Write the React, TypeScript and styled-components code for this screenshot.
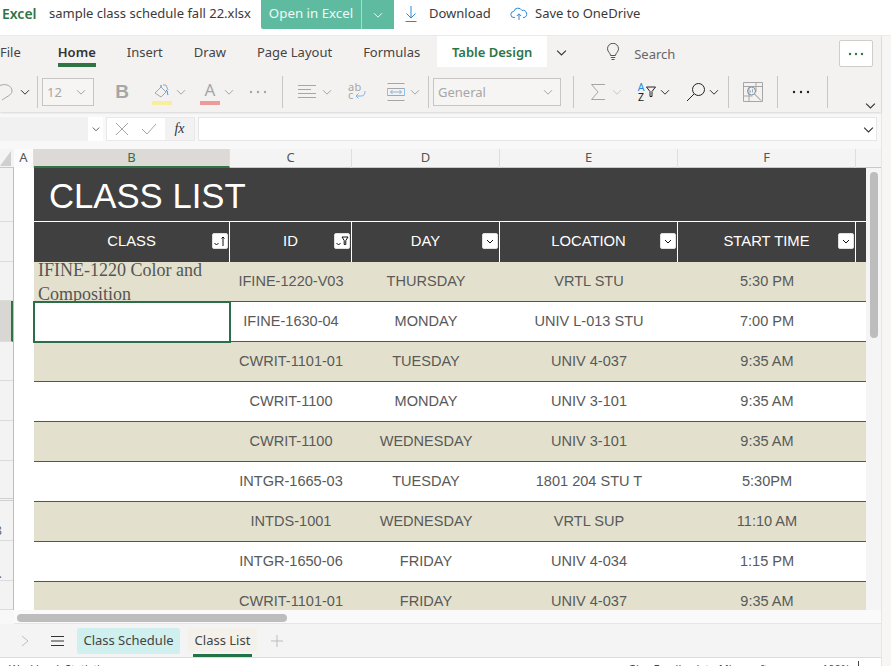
import React from "react";
import styled, { createGlobalStyle } from "styled-components";

const Global = createGlobalStyle`
  html, body { margin: 0; padding: 0; background: #fff; }
  * { box-sizing: border-box; }
`;
const UI = `"Noto Sans", "Open Sans", sans-serif`;
const CELL = `"Liberation Sans", Arial, sans-serif`;
const GREEN = "#2f7445";
const COLS = "196px 122px 148px 178px 178px 10px";

const Page = styled.div`
  width: 891px; height: 666px; overflow: hidden; display: flex; flex-direction: column;
  font-family: ${UI}; color: #444; background: #fff;
`;
const TopBar = styled.header`
  height: 36px; flex: none; display: flex; align-items: flex-start; padding-left: 2px;
  border-bottom: 1px solid #ececec; font-size: 13px; color: #3b3a39; line-height: 27px;
`;
const Brand = styled.span`font-weight: 600; color: ${GREEN}; font-size: 14px; width: 47px;`;
const FileName = styled.span`width: 212px; white-space: nowrap;`;
const OpenGroup = styled.div`
  display: flex; height: 29px; width: 133px; background: #5fbba0; color: #eefaf6; border-bottom-left-radius: 2px;
  font-size: 13.300px; margin-right: 7px;
`;
const OpenLabel = styled.span`width: 101px; text-align: center; border-right: 1px solid #a9dccd;`;
const OpenChevron = styled.span`flex: 1; display: flex; align-items: center; justify-content: center;`;
const TopAction = styled.span<{ $ml?: number; $w?: number }>`
  display: flex; align-items: center; height: 27px; white-space: nowrap; margin-left: ${p => p.$ml ?? 0}px;
  ${p => (p.$w ? `width: ${p.$w}px;` : "")}
`;
const TopActionIcon = styled.span<{ $w: number }>`width: ${p => p.$w}px; display: flex; justify-content: center;`;

const Workspace = styled.div`flex: 1; min-height: 0; display: flex;`;
const Main = styled.div`width: 881px; flex: none; display: flex; flex-direction: column; min-height: 0; background: #f8f8f8;`;
const RightStrip = styled.div`flex: 1; background: #f7f6f5; border-left: 1px solid #e8e6e4;`;

const Ribbon = styled.div`background: #f3f2f1; flex: none; box-shadow: 0 1px 2px rgba(0,0,0,.14); position: relative;`;
const TabsRow = styled.nav`
  height: 32px; display: flex; align-items: flex-start; font-size: 13px; color: #444; position: relative; gap: 31px; line-height: 32px;
`;
const NavTab = styled.span<{ $active?: boolean; $ml?: number }>`
  height: 31px; white-space: nowrap; margin-left: ${p => p.$ml ?? 0}px;
  font-weight: ${p => (p.$active ? 600 : 400)}; color: ${p => (p.$active ? "#333" : "#444")};
  border-bottom: ${p => (p.$active ? `4px solid ${GREEN}` : "none")};
`;
const ContextTab = styled.span`
  height: 31px; width: 110px; margin-left: -14px; background: #fff; color: ${GREEN}; font-weight: 600; text-align: center; white-space: nowrap;
`;
const TabTools = styled.div`display: flex; align-items: center; height: 32px; margin-left: -22px;`;
const SearchLabel = styled.span`margin-left: 9px; color: #666; margin-top: 3px;`;
const MoreButton = styled.button`
  margin-left: auto; margin-right: 8px; margin-top: 4px; width: 34px; height: 27px; background: #fff; border: 1px solid #cfcdcb; border-radius: 2px;
  padding: 0; display: flex; align-items: center; justify-content: center;
`;
const Toolbar = styled.div`height: 44px; display: flex; align-items: center; padding-top: 4px; position: relative; overflow: hidden;`;
const Slot = styled.span<{ $w: number; $ml?: number }>`
  width: ${p => p.$w}px; margin-left: ${p => p.$ml ?? 0}px; flex: none; display: flex; align-items: center; justify-content: center; height: 30px;
`;
const Sep = styled.span<{ $ml?: number }>`width: 1px; height: 32px; flex: none; background: #c8c6c4; margin-left: ${p => p.$ml ?? 0}px;`;
const SelectBox = styled.span<{ $w: number; $ml: number }>`
  width: ${p => p.$w}px; margin-left: ${p => p.$ml}px; height: 28px; flex: none; border: 1px solid #c8c6c4; display: flex; align-items: center;
  justify-content: space-between; padding: 0 7px 0 4px; font-size: 13px; color: #a6a6a6; background: #f6f5f4;
`;
const BoldGlyph = styled.span`font: 700 19px ${CELL}; color: #a6a6a6;`;
const ColorTool = styled.span`display: flex; flex-direction: column; align-items: center; width: 20px; height: 30px; justify-content: flex-end;`;
const ColorGlyph = styled.span`font: 400 17px/20px ${UI}; color: #a6a6a6; height: 21px;`;
const ColorBar = styled.span<{ $c: string }>`display: block; width: 20px; height: 4px; background: ${p => p.$c}; margin-bottom: 2px;`;
const Wrap = styled.span`font: 400 11px/8px ${UI}; color: #a6a6a6; position: relative; display: block; width: 18px; height: 20px; padding-top: 1px; letter-spacing: 0.3px;`;
const AZ = styled.span`display: flex; flex-direction: column; font: 400 10.500px/10px ${UI}; width: 9px; align-items: center;`;
const AZa = styled.span`color: #2b88d8;`;
const AZz = styled.span`color: #222;`;
const CollapseRibbon = styled.span`position: absolute; right: 4px; bottom: 0; width: 14px; height: 14px; display: flex; align-items: center; justify-content: center;`;

const FormulaBar = styled.div`height: 33px; flex: none; display: flex; align-items: center; padding-top: 5px; padding-bottom: 4px;`;
const NameBox = styled.div`width: 103px; height: 24px; background: #f1f1f1; display: flex; justify-content: flex-end;`;
const NameArrow = styled.span`width: 15px; background: #fff; display: flex; align-items: center; justify-content: center;`;
const FormulaButtons = styled.div`width: 89px; height: 24px; margin-left: 3px; display: flex; border: 1px solid #e9e9e9; background: #fff;`;
const FxIcons = styled.span`width: 58px; display: flex; align-items: center; justify-content: space-around; padding: 0 2px;`;
const FxBox = styled.span`flex: 1; background: #f2f2f2; font: italic 400 14px "Liberation Serif", serif; color: #333; display: flex; align-items: center; justify-content: center;`;
const FormulaInput = styled.div`width: 679px; height: 24px; margin-left: 3px; background: #fff; border: 1px solid #e6e6e6; display: flex; align-items: center; justify-content: flex-end; padding-right: 2px;`;

const ColHeadRow = styled.div`
  height: 19px; flex: none; margin-top: 4px; display: flex; background: #f4f4f4; border-bottom: 1px solid #c8c8c8; position: relative; font-size: 13px; color: #555;
`;
const Corner = styled.span`width: 14px; flex: none; display: flex; align-items: flex-end; padding-bottom: 0;`;
const ColHead = styled.span<{ $w: number; $sel?: boolean; $white?: boolean }>`
  width: ${p => p.$w}px; flex: none; text-align: center; line-height: 17px; height: 19px;
  border-right: 1px solid #dedede;
  background: ${p => (p.$sel ? "#dcd9d6" : p.$white ? "#fbfbfb" : "transparent")};
  color: ${p => (p.$sel ? GREEN : "#555")};
  border-bottom: ${p => (p.$sel ? `2px solid ${GREEN}` : "none")};
`;
const SheetBody = styled.div`height: 442px; flex: none; display: flex; overflow: hidden;`;
const Gutter = styled.div`width: 14px; flex: none; background: #f3f3f3; border-right: 1px solid #bdbdbd; display: flex; flex-direction: column;`;
const GutterRow = styled.div<{ $h: number; $sel?: boolean; $double?: boolean }>`
  height: ${p => p.$h}px; flex: none; position: relative;
  background: ${p => (p.$sel ? "#d9d7d4" : "transparent")};
  border-right: ${p => (p.$sel ? `2px solid ${GREEN}` : "none")};
  border-bottom: ${p => (p.$double ? "3px double #d0d0d0" : "1px solid #dcdcdc")};
  overflow: hidden;
`;
const RowNumber = styled.span<{ $top: number }>`
  position: absolute; right: 11px; top: ${p => p.$top}px; font-size: 13px; line-height: 16px; color: #666;
`;
const ColA = styled.div`width: 20px; flex: none; background: #fff;`;
const Table = styled.div`width: 832px; flex: none; font: 14.550px ${CELL}; color: #595959; background: #fff;`;
const TitleRow = styled.div`
  height: 54px; background: #404040; color: #fff; border-bottom: 1px solid #fff; font: 34.700px/53px ${CELL}; padding: 2px 0 0 15px; white-space: nowrap;
`;
const HeaderRow = styled.div`display: grid; grid-template-columns: ${COLS}; height: 40px; background: #404040; color: #fff; font-size: 14.800px;`;
const HeaderCell = styled.div`position: relative; border-right: 1px solid #fff; text-align: center; line-height: 38px; height: 40px; &:last-child { border-right: none; }`;
const FilterBtn = styled.span`
  position: absolute; right: 1px; top: 11px; width: 16px; height: 16px; background: #fff; border-radius: 2px; border: 1px solid #e0e0e0;
  display: flex; align-items: center; justify-content: center;
`;
const DataRow = styled.div<{ $band: boolean }>`
  display: grid; grid-template-columns: ${COLS}; height: 40px; background: ${p => (p.$band ? "#e3e1cd" : "#fff")}; border-bottom: 1px solid #555;
`;
const Cell = styled.div`text-align: center; line-height: 38px; white-space: nowrap;`;
const SerifCell = styled.div`
  font: 18px/24px "Liberation Serif", serif; color: #555; padding: 0 0 0 4px; height: 43px; overflow: hidden; text-align: left; white-space: nowrap;
  margin-top: -4px;
`;
const SelectedCell = styled.div`outline: 2px solid #2c6e49; outline-offset: -1px; margin: 0; height: 40px;`;
const VTrack = styled.div`flex: 1; background: #f5f5f5; padding: 4px 0 0 4px;`;
const VThumb = styled.div`width: 8px; height: 166px; border-radius: 4px; background: #bdbdbd;`;
const HTrack = styled.div`height: 14px; flex: none; margin-left: 14px; background: #fafafa; padding: 4px 0 0 3px; border-bottom: 1px solid #e6e6e6;`;
const HThumb = styled.div`width: 270px; height: 8px; border-radius: 4px; background: #bdbdbd;`;
const SheetTabs = styled.div`height: 34px; flex: none; background: #f4f4f4; border-bottom: 1px solid #dcdcdc; display: flex; align-items: flex-start; padding-top: 4px; font-size: 13px; color: #444;`;
const SheetNav = styled.span<{ $w: number }>`width: ${p => p.$w}px; height: 26px; flex: none; display: flex; align-items: center; justify-content: center;`;
const SheetTab = styled.span<{ $w: number; $bg: string; $h: number; $ml?: number }>`
  width: ${p => p.$w}px; height: ${p => p.$h}px; background: ${p => p.$bg}; margin-left: ${p => p.$ml ?? 0}px; border-radius: 2px; flex: none; text-align: center; line-height: 24px; white-space: nowrap; position: relative;
`;
const ActiveMark = styled.span`position: absolute; left: 5px; right: 5px; top: 26px; height: 3px; background: #217346;`;
const StatusBar = styled.div`flex: 1; background: #fff; display: flex; font-size: 11px; color: #444; padding: 3px 0 0 9px; white-space: nowrap; line-height: 15px; position: relative;`;
const StatusRight = styled.span`margin-left: auto; display: flex; width: 253px; gap: 0;`;
const Feedback = styled.span`width: 194px;`;
const ZoomLevel = styled.span`width: 36px;`;
const Tick = styled.span`width: 1px; height: 6px; background: #444;`;

type IP = { c?: string };
const Chev = ({ c = "#333", s = 10 }: IP & { s?: number }) => (
  <svg width={s} height={s} viewBox="0 0 10 10" fill="none" stroke={c} strokeWidth="1"><path d="M1 3.200 5 7.200 9 3.200" /></svg>
);

const data: [string, string, string, string][] = [
  ["IFINE-1220-V03", "THURSDAY", "VRTL STU", "5:30 PM"],
  ["IFINE-1630-04", "MONDAY", "UNIV L-013 STU", "7:00 PM"],
  ["CWRIT-1101-01", "TUESDAY", "UNIV 4-037", "9:35 AM"],
  ["CWRIT-1100", "MONDAY", "UNIV 3-101", "9:35 AM"],
  ["CWRIT-1100", "WEDNESDAY", "UNIV 3-101", "9:35 AM"],
  ["INTGR-1665-03", "TUESDAY", "1801 204 STU T", "5:30PM"],
  ["INTDS-1001", "WEDNESDAY", "VRTL SUP", "11:10 AM"],
  ["INTGR-1650-06", "FRIDAY", "UNIV 4-034", "1:15 PM"],
  ["CWRIT-1101-01", "FRIDAY", "UNIV 4-037", "9:35 AM"],
];

const FilterIcon = ({ kind }: { kind: "sort" | "funnel" | "plain" }) => (
  <svg width="14" height="14" viewBox="0 0 14 14" fill="none" stroke="#111" strokeWidth="1">
    {kind === "plain" ? <path d="M4 6 7 9 10 6" /> : <path d="M1.500 9 3.500 11 5.500 9" />}
    {kind === "sort" && <path d="M10 12V3M8.500 4.500 10 3l1.500 1.500" />}
    {kind === "funnel" && <path d="M7 3h6L10.800 6.500V10.500H9.200V6.500Z" />}
  </svg>
);

const gutter: { h: number; sel?: boolean; dbl?: boolean; n?: string; top?: number }[] = [
  { h: 54 }, { h: 40 }, { h: 39 }, { h: 41, sel: true }, { h: 39 }, { h: 40 }, { h: 40 },
  { h: 40, dbl: true }, { h: 40, n: "8", top: 21 }, { h: 40, n: ".", top: 24 }, { h: 29, n: ",", top: 17 },
];

export default function App() {
  return (
    <Page>
      <Global />
      <TopBar>
        <Brand>Excel</Brand>
        <FileName>sample class schedule fall 22.xlsx</FileName>
        <OpenGroup>
          <OpenLabel>Open in Excel</OpenLabel>
          <OpenChevron><Chev c="#eefaf6" /></OpenChevron>
        </OpenGroup>
        <TopAction>
          <TopActionIcon $w={20}>
            <svg width="14" height="18" viewBox="0 0 14 18" fill="none" stroke="#2b88d8" strokeWidth="1"><path d="M7 1v12M2.500 8.500 7 13l4.500-4.500M1.500 16.500h11" /></svg>
          </TopActionIcon>
        </TopAction>
        <TopAction $ml={8} $w={80}>Download</TopAction>
        <TopAction>
          <TopActionIcon $w={20}>
            <svg width="18" height="14" viewBox="0 0 18 14" fill="none" stroke="#2b88d8" strokeWidth="1"><path d="M5 10.500H4a3 3 0 0 1-.3-6A4.500 4.500 0 0 1 12 3.500a3.500 3.500 0 0 1 2 7h-1M9 13V7M6.800 9 9 6.800 11.200 9" /></svg>
          </TopActionIcon>
        </TopAction>
        <TopAction $ml={6}>Save to OneDrive</TopAction>
      </TopBar>
      <Workspace>
        <Main>
          <Ribbon>
            <TabsRow>
              <NavTab>File</NavTab>
              <NavTab $active $ml={6}>Home</NavTab>
              <NavTab>Insert</NavTab>
              <NavTab>Draw</NavTab>
              <NavTab>Page Layout</NavTab>
              <NavTab>Formulas</NavTab>
              <ContextTab>Table Design</ContextTab>
              <TabTools>
                <Chev s={11} />
                <Slot $w={24} $ml={34}>
                  <svg width="14" height="18" viewBox="0 0 14 18" fill="none" stroke="#555" strokeWidth="1"><path d="M4.500 12.500C4.500 10 1.500 9 1.500 5.800a5.500 5.500 0 0 1 11 0C12.500 9 9.500 10 9.500 12.500ZM4.800 14.500h4.400M5.500 16.500h3" /></svg>
                </Slot>
                <SearchLabel>Search</SearchLabel>
              </TabTools>
              <MoreButton aria-label="More">
                <svg width="16" height="4" viewBox="0 0 16 4" fill={GREEN}><circle cx="2" cy="2" r="1.200" /><circle cx="8" cy="2" r="1.200" /><circle cx="14" cy="2" r="1.200" /></svg>
              </MoreButton>
            </TabsRow>
            <Toolbar>
              <Slot $w={16}>
                <svg width="16" height="18" viewBox="0 0 16 18" fill="none" stroke="#a6a6a6" strokeWidth="1"><path d="M0 2.500C6 0 12 3 12 8 12 12 6 14 2 17" /></svg>
              </Slot>
              <Slot $w={17}><Chev /></Slot>
              <Sep $ml={4} />
              <SelectBox $w={52} $ml={4}>12<Chev c="#a6a6a6" /></SelectBox>
              <Slot $w={56}><BoldGlyph>B</BoldGlyph></Slot>
              <Slot $w={24}>
                <ColorTool>
                  <svg width="20" height="17" viewBox="0 0 20 17" fill="none" strokeWidth="1"><path d="M3 9 9 3l5 5-5 5Z" stroke="#a6a6a6" /><path d="M9 3V1M16 11c-1-2 0-4-2-5" stroke="#2b88d8" /><path d="M11 1h3l2 5" stroke="#a6a6a6" /></svg>
                  <ColorBar $c="#f7ef9a" />
                </ColorTool>
              </Slot>
              <Slot $w={14}><Chev c="#a6a6a6" /></Slot>
              <Slot $w={24} $ml={10}>
                <ColorTool><ColorGlyph>A</ColorGlyph><ColorBar $c="#ef9a9a" /></ColorTool>
              </Slot>
              <Slot $w={14}><Chev c="#a6a6a6" /></Slot>
              <Slot $w={44}>
                <svg width="18" height="4" viewBox="0 0 18 4" fill="#a6a6a6"><circle cx="2" cy="2" r="1.200" /><circle cx="9" cy="2" r="1.200" /><circle cx="16" cy="2" r="1.200" /></svg>
              </Slot>
              <Sep $ml={2} />
              <Slot $w={20} $ml={14}>
                <svg width="18" height="16" viewBox="0 0 18 16" fill="none" stroke="#a6a6a6"><path d="M0 1.500h18M0 5.500h13M0 9.500h18M0 13.500h18" /></svg>
              </Slot>
              <Slot $w={14} $ml={3}><Chev c="#a6a6a6" /></Slot>
              <Slot $w={24} $ml={11}>
                <Wrap>
                  ab<br />c
                  <svg width="11" height="9" viewBox="0 0 11 9" fill="none" stroke="#7fb6e6" style={{ position: "absolute", right: 0, bottom: 2 }}><path d="M10 0c0 3-1 5-3.500 5H1M3.500 2.500 1 5l2.500 2.500" /></svg>
                </Wrap>
              </Slot>
              <Slot $w={22} $ml={16}>
                <svg width="18" height="18" viewBox="0 0 18 18" fill="none" stroke="#a6a6a6"><path d="M.5.500h17M.5 17.500h17M.5 5.500h17M.5 12.500h17" /><path d="M.5 5.500v7M17.500 5.500v7" stroke="#8ec0e8" /><path d="M3.500 9h11M5.500 7l-2 2 2 2M12.500 7l2 2-2 2" stroke="#7fb6e6" /></svg>
              </Slot>
              <Slot $w={14} $ml={1}><Chev c="#a6a6a6" /></Slot>
              <Sep $ml={6} />
              <SelectBox $w={128} $ml={4}>General<Chev c="#a6a6a6" /></SelectBox>
              <Sep $ml={12} />
              <Slot $w={20} $ml={14}>
                <svg width="16" height="18" viewBox="0 0 16 18" fill="none" stroke="#a6a6a6"><path d="M15 1.500H1.500L8 9l-6.500 7.500H15" /></svg>
              </Slot>
              <Slot $w={14} $ml={2}><Chev c="#c8c6c4" /></Slot>
              <Slot $w={20} $ml={12}>
                <AZ><AZa>A</AZa><AZz>Z</AZz></AZ>
                <svg width="10" height="12" viewBox="0 0 10 12" fill="none" stroke="#222"><path d="M.5 1h9L6 5.500V10.500H4V5.500Z" /></svg>
              </Slot>
              <Slot $w={14} $ml={2}><Chev /></Slot>
              <Slot $w={20} $ml={14}>
                <svg width="20" height="20" viewBox="0 0 20 20" fill="none" stroke="#222"><circle cx="12.500" cy="7.500" r="6" /><path d="M8 12 1 19" /></svg>
              </Slot>
              <Slot $w={14} $ml={1}><Chev /></Slot>
              <Sep $ml={7} />
              <Slot $w={20} $ml={14}>
                <svg width="20" height="20" viewBox="0 0 20 20" fill="none" stroke="#a6a6a6"><path d="M.5.500h19v19H.5ZM.5 4.500h19M.5 14h9M6 4.500v15M13 4.500V10M13 .5v4" /><circle cx="8.500" cy="9" r="4" stroke="#8c8c8c" /><path d="M11.500 12 18 18.500" stroke="#8c8c8c" /><path d="M7.500 10.500V8.500M9.500 10.500V7" stroke="#7fb6e6" /></svg>
              </Slot>
              <Sep $ml={14} />
              <Slot $w={20} $ml={13}>
                <svg width="18" height="4" viewBox="0 0 18 4" fill="#222"><circle cx="2" cy="2" r="1.200" /><circle cx="9" cy="2" r="1.200" /><circle cx="16" cy="2" r="1.200" /></svg>
              </Slot>
              <Sep $ml={16} />
              <CollapseRibbon><Chev s={11} /></CollapseRibbon>
            </Toolbar>
          </Ribbon>
          <FormulaBar>
            <NameBox><NameArrow><Chev s={8} /></NameArrow></NameBox>
            <FormulaButtons>
              <FxIcons>
                <svg width="14" height="14" viewBox="0 0 14 14" stroke="#a6a6a6" fill="none"><path d="M1 1l12 12M13 1 1 13" /></svg>
                <svg width="16" height="12" viewBox="0 0 16 12" stroke="#a6a6a6" fill="none"><path d="M1 6l5 5L15 1" /></svg>
              </FxIcons>
              <FxBox>fx</FxBox>
            </FormulaButtons>
            <FormulaInput><Chev s={11} /></FormulaInput>
          </FormulaBar>
          <ColHeadRow>
            <Corner>
              <svg width="12" height="18" viewBox="0 0 12 18"><path d="M11 2v15H0Z" fill="#cfcfcf" /></svg>
            </Corner>
            <ColHead $w={20} $white>A</ColHead>
            <ColHead $w={196} $sel>B</ColHead>
            <ColHead $w={122}>C</ColHead>
            <ColHead $w={148}>D</ColHead>
            <ColHead $w={178}>E</ColHead>
            <ColHead $w={178}>F</ColHead>
          </ColHeadRow>
          <SheetBody>
            <Gutter>
              {gutter.map((g, i) => (
                <GutterRow key={i} $h={g.h} $sel={g.sel} $double={g.dbl}>
                  {g.n && <RowNumber $top={g.top ?? 14}>{g.n}</RowNumber>}
                </GutterRow>
              ))}
            </Gutter>
            <ColA />
            <Table>
              <TitleRow>CLASS LIST</TitleRow>
              <HeaderRow>
                <HeaderCell>CLASS<FilterBtn><FilterIcon kind="sort" /></FilterBtn></HeaderCell>
                <HeaderCell>ID<FilterBtn><FilterIcon kind="funnel" /></FilterBtn></HeaderCell>
                <HeaderCell>DAY<FilterBtn><FilterIcon kind="plain" /></FilterBtn></HeaderCell>
                <HeaderCell>LOCATION<FilterBtn><FilterIcon kind="plain" /></FilterBtn></HeaderCell>
                <HeaderCell>START TIME<FilterBtn><FilterIcon kind="plain" /></FilterBtn></HeaderCell>
                <HeaderCell />
              </HeaderRow>
              {data.map((r, i) => (
                <DataRow key={i} $band={i % 2 === 0}>
                  {i === 0 ? (
                    <SerifCell>IFINE-1220 Color and<br />Composition</SerifCell>
                  ) : i === 1 ? (
                    <SelectedCell />
                  ) : (
                    <Cell />
                  )}
                  {r.map((t, j) => <Cell key={j}>{t}</Cell>)}
                  <Cell />
                </DataRow>
              ))}
            </Table>
            <VTrack><VThumb /></VTrack>
          </SheetBody>
          <HTrack><HThumb /></HTrack>
          <SheetTabs>
            <SheetNav $w={50}>
              <svg width="8" height="12" viewBox="0 0 8 12" fill="none" stroke="#bdbdbd"><path d="M1 1l6 5-6 5" /></svg>
            </SheetNav>
            <SheetNav $w={14}>
              <svg width="13" height="10" viewBox="0 0 13 10" fill="none" stroke="#333"><path d="M0 .5h13M0 5h13M0 9.500h13" /></svg>
            </SheetNav>
            <SheetTab $w={103} $bg="#cff0ee" $h={26} $ml={13}>Class Schedule</SheetTab>
            <SheetTab $w={69} $bg="#f3f1ea" $h={24} $ml={8}>Class List<ActiveMark /></SheetTab>
            <SheetNav $w={40}>
              <svg width="12" height="12" viewBox="0 0 12 12" fill="none" stroke="#bdbdbd"><path d="M6 0v12M0 6h12" /></svg>
            </SheetNav>
          </SheetTabs>
          <StatusBar>
            Workbook Statistics
            <StatusRight>
              <Feedback>Give Feedback to Microsoft</Feedback>
              <ZoomLevel>100%</ZoomLevel>
              <Tick />
            </StatusRight>
          </StatusBar>
        </Main>
        <RightStrip />
      </Workspace>
    </Page>
  );
}
